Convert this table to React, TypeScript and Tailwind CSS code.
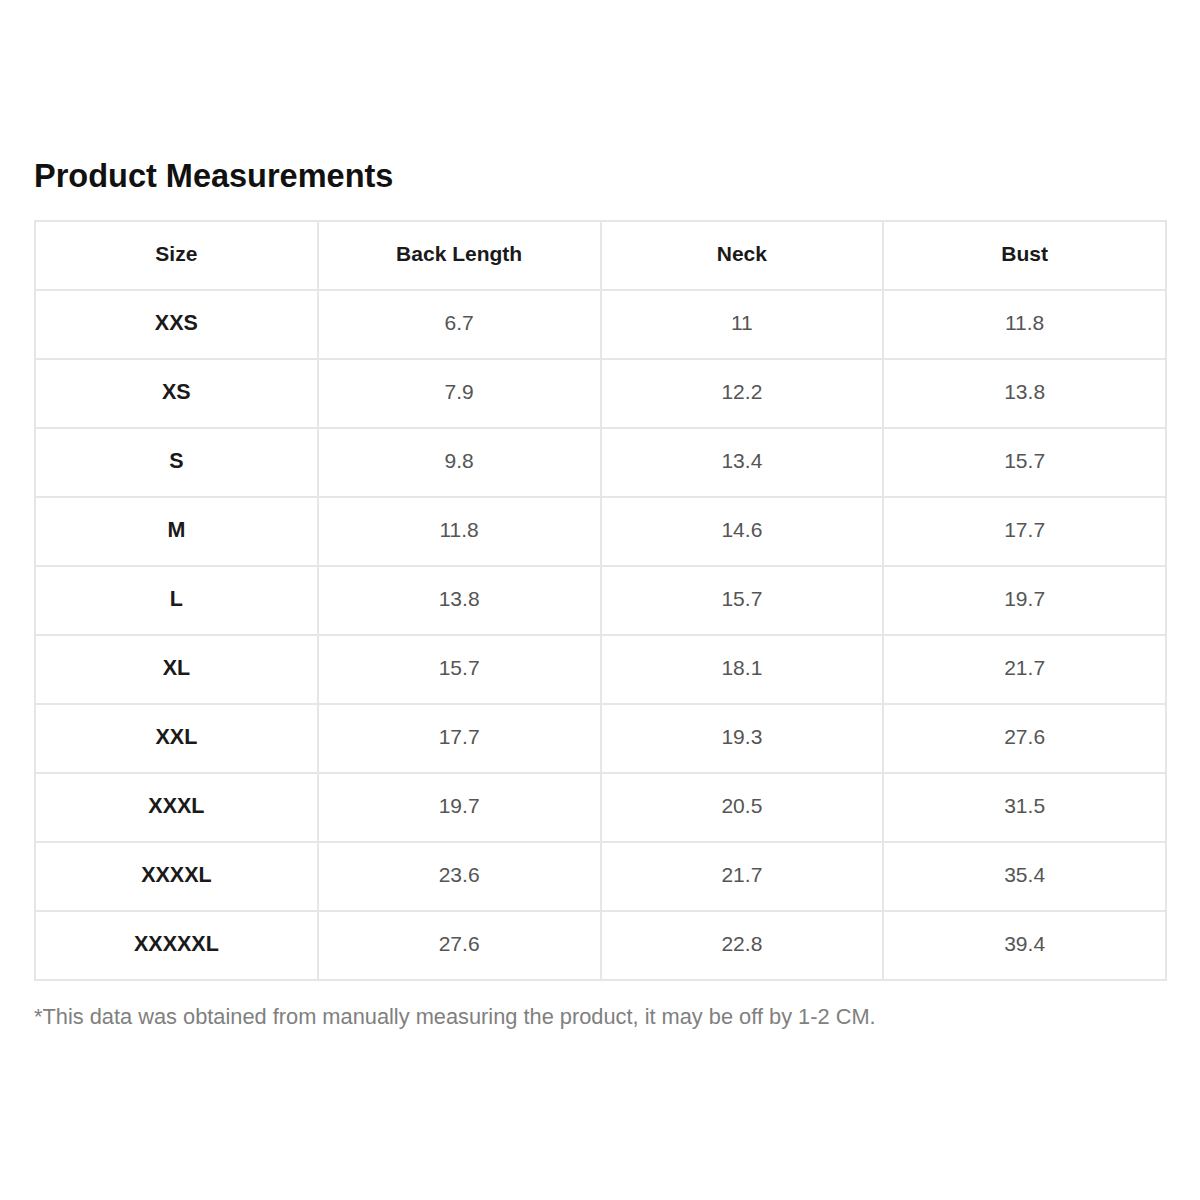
import React from 'react';

const rows: [string, string, string, string][] = [
  ['XXS', '6.7', '11', '11.8'],
  ['XS', '7.9', '12.2', '13.8'],
  ['S', '9.8', '13.4', '15.7'],
  ['M', '11.8', '14.6', '17.7'],
  ['L', '13.8', '15.7', '19.7'],
  ['XL', '15.7', '18.1', '21.7'],
  ['XXL', '17.7', '19.3', '27.6'],
  ['XXXL', '19.7', '20.5', '31.5'],
  ['XXXXL', '23.6', '21.7', '35.4'],
  ['XXXXXL', '27.6', '22.8', '39.4'],
];

const headers = ['Size', 'Back Length', 'Neck', 'Bust'];

export default function App() {
  return (
    <div className="w-[1200px] h-[1200px] bg-white font-['Liberation_Sans',Arial,sans-serif] pt-[157px] pl-[34px]">
      <h1 className="text-[32.5px] leading-[38px] font-bold text-[#111]">Product Measurements</h1>
      <table className="mt-[25px] w-[1133px] border-collapse table-fixed">
        <thead>
          <tr className="h-[69px]">
            {headers.map(h => (
              <th key={h} className="border-2 border-[#e6e6e6] pb-[3px] text-[21px] font-bold text-[#1a1a1a] text-center">
                {h}
              </th>
            ))}
          </tr>
        </thead>
        <tbody>
          {rows.map(r => (
            <tr key={r[0]} className="h-[69px]">
              <td className="border-2 border-[#e6e6e6] pb-[3px] text-[21.5px] font-bold text-[#1a1a1a] text-center">{r[0]}</td>
              {r.slice(1).map((v, i) => (
                <td key={i} className="border-2 border-[#e6e6e6] pb-[3px] text-[21px] text-[#555] text-center">
                  {v}
                </td>
              ))}
            </tr>
          ))}
        </tbody>
      </table>
      <p className="mt-[23px] text-[21.8px] leading-[26px] text-[#808080]">
        *This data was obtained from manually measuring the product, it may be off by 1-2 CM.
      </p>
    </div>
  );
}
